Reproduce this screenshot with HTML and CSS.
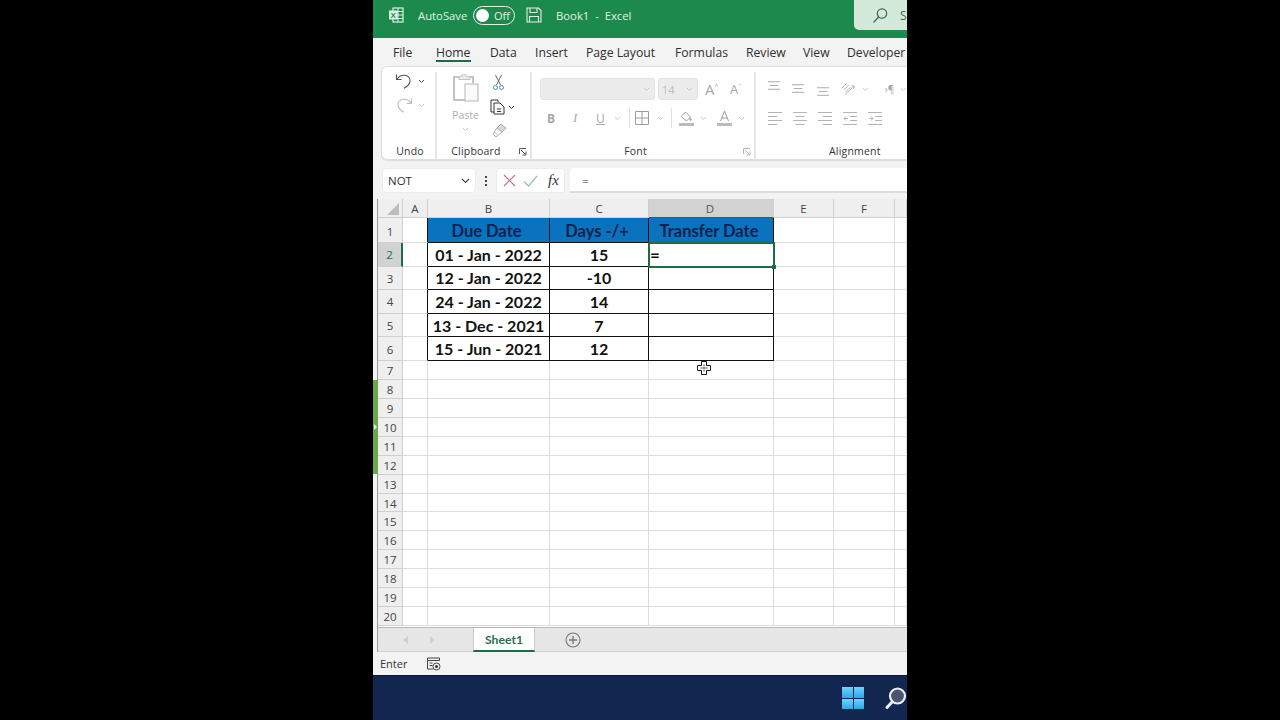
FILE: index.html
```html
<!DOCTYPE html>
<html lang="en">
<head>
<meta charset="utf-8">
<title>Book1 - Excel</title>
<link rel="stylesheet" href="styles.css">
</head>
<body>
<div class="app">
  <header class="titlebar">
    <svg class="xl" width="16" height="16" viewBox="0 0 16 16"><rect x="5" y="1" width="10" height="14" fill="none" stroke="#dff0e4" stroke-width="1.2"/><path d="M5 4.5h10M5 8h10M5 11.5h10M10 1v14" stroke="#dff0e4" fill="none"/><rect x="1" y="3.5" width="8.5" height="9" fill="#dff0e4"/><text x="2.6" y="11" class="xl-x">X</text></svg>
    <span class="autosave">AutoSave</span>
    <span class="toggle"><i class="knob"></i><span>Off</span></span>
    <svg class="save" width="16" height="16" viewBox="0 0 16 16" fill="none" stroke="#dff0e4" stroke-width="1.1"><path d="M1 1h11.5L15 3.5V15H1z"/><path d="M4 1v4.5h7V1M3.5 15V9.5h9V15"/></svg>
    <span class="doc">Book1 &nbsp;- &nbsp;Excel</span>
    <div class="search">
      <svg width="17" height="17" viewBox="0 0 17 17" fill="none" stroke="#3b6a4d" stroke-width="1.2"><circle cx="10" cy="6.5" r="4.7"/><path d="M6.6 10 1.5 15.5"/></svg>
      <span>S</span>
    </div>
  </header>

  <nav class="menu">
    <span class="m-file">File</span>
    <span class="m-home">Home</span>
    <span class="m-data">Data</span>
    <span class="m-insert">Insert</span>
    <span class="m-page">Page Layout</span>
    <span class="m-form">Formulas</span>
    <span class="m-rev">Review</span>
    <span class="m-view">View</span>
    <span class="m-dev">Developer</span>
  </nav>

  <section class="ribbon">
    <div class="group g-undo">
      <div class="g-body undo-body">
        <div class="u-row">
          <svg width="18" height="17" viewBox="0 0 18 17" fill="none" stroke="#555" stroke-width="1.1"><path d="M1.5 1.5v5h5M1.8 6.2C4 3 7 1.8 10 2.3c3.5.6 5.5 3.2 5 6-.4 2.5-2.5 5-6 7"/></svg>
          <svg class="chev" width="7" height="5" viewBox="0 0 7 5" fill="none" stroke="#444" stroke-width="1"><path d="M1 1l2.5 2.5L6 1"/></svg>
        </div>
        <div class="u-row">
          <svg width="18" height="17" viewBox="0 0 18 17" fill="none" stroke="#bdbdbd" stroke-width="1.1"><path d="M16.5 1.5v5h-5M16.2 6.2C14 3 11 1.8 8 2.3c-3.5.6-5.5 3.2-5 6 .4 2.5 2.5 5 6 7"/></svg>
          <svg class="chev" width="7" height="5" viewBox="0 0 7 5" fill="none" stroke="#c6c6c6" stroke-width="1"><path d="M1 1l2.5 2.5L6 1"/></svg>
        </div>
      </div>
      <div class="g-label undo-l">Undo</div>
    </div>

    <div class="group g-clip">
      <div class="g-body clip-body">
        <div class="paste">
          <svg width="28" height="29" viewBox="0 0 28 29" fill="none" stroke="#c4c4c4" stroke-width="1.1"><path d="M7 3H2v23h11" stroke-width="2"/><path d="M7 4.500V2.500h2l1-1.500h4l1 1.500h3v3H7z" fill="#ececec"/><path d="M18 3h3v6" stroke-width="2"/><rect x="13" y="10" width="13" height="17" fill="#fbfbfb" stroke="#bcbcbc"/></svg>
          <span class="paste-t">Paste</span>
          <svg width="7" height="5" viewBox="0 0 7 5" fill="none" stroke="#c6c6c6" stroke-width="1"><path d="M1 1l2.500 2.500L6 1"/></svg>
        </div>
        <div class="clip-tools">
          <svg width="11" height="17" viewBox="0 0 11 17" fill="none" stroke="#666" stroke-width="1"><path d="M2.500 1 7.500 11M8.500 1 3.500 11"/><circle cx="2.500" cy="13.500" r="2" stroke="#4f93a8"/><circle cx="8.500" cy="13.500" r="2" stroke="#4f93a8"/></svg>
          <div class="copy-row">
            <svg width="15" height="16" viewBox="0 0 15 16" fill="none" stroke="#333" stroke-width="1"><path d="M4 13H1V1h7v2"/><path d="M4 4h6l4 4v7H4z"/><path d="M7 10h4M7 12.500h4"/></svg>
            <svg class="chev" width="7" height="5" viewBox="0 0 7 5" fill="none" stroke="#333" stroke-width="1"><path d="M1 1l2.500 2.500L6 1"/></svg>
          </div>
          <svg width="15" height="15" viewBox="0 0 15 15" fill="none" stroke="#a8a8a8" stroke-width="1"><path d="M9 1l5 4-4 4-5-4z" fill="#d8d8d8"/><path d="M5 5 1 11l3 3 6-5M3 9.500l2 2"/></svg>
        </div>
      </div>
      <div class="g-label shift">Clipboard<svg class="launch" width="8" height="8" viewBox="0 0 8 8" fill="none" stroke="#555"><path d="M.5 6V.5H7M2 2l4.500 4.500M3.500 7H7V3.500"/></svg></div>
    </div>

    <div class="group g-font">
      <div class="g-body font-body">
        <div class="f-row f-top">
          <div class="fbox fname"><svg width="7" height="5" viewBox="0 0 7 5" fill="none" stroke="#c6c6c6"><path d="M1 1l2.500 2.500L6 1"/></svg></div>
          <div class="fbox fsize"><span>14</span><svg width="7" height="5" viewBox="0 0 7 5" fill="none" stroke="#c6c6c6"><path d="M1 1l2.500 2.500L6 1"/></svg></div>
          <span class="fa-big">A<sup>^</sup></span>
          <span class="fa-small">A<sup>ˇ</sup></span>
        </div>
        <div class="f-row f-bot">
          <b class="t-b">B</b>
          <i class="t-i">I</i>
          <u class="t-u">U</u>
          <svg class="c1" width="7" height="5" viewBox="0 0 7 5" fill="none" stroke="#c6c6c6"><path d="M1 1l2.500 2.500L6 1"/></svg>
          <i class="vsep"></i>
          <svg class="bord" width="14" height="14" viewBox="0 0 14 14" fill="none" stroke="#9a9a9a"><path d="M.5.5h13v13H.5zM7 .5v13M.5 7h13"/></svg>
          <svg class="c2" width="7" height="5" viewBox="0 0 7 5" fill="none" stroke="#c6c6c6"><path d="M1 1l2.500 2.500L6 1"/></svg>
          <i class="vsep v2"></i>
          <svg class="fill" width="15" height="16" viewBox="0 0 15 16"><path d="M2 6.500 6.500 2l5 5-4 4z" fill="none" stroke="#a0a0a0"/><path d="M10 8l2 0 1 2-2 1z" fill="#aaa"/><rect y="13" width="15" height="3" fill="#bcbcbc"/></svg>
          <svg class="c3" width="7" height="5" viewBox="0 0 7 5" fill="none" stroke="#c6c6c6"><path d="M1 1l2.500 2.500L6 1"/></svg>
          <svg class="acol" width="15" height="16" viewBox="0 0 15 16"><path d="M3.500 11 7.500 1l4 10M5 8h5" fill="none" stroke="#9c9c9c"/><rect y="13" width="15" height="3" fill="#bcbcbc"/></svg>
          <svg class="c4" width="7" height="5" viewBox="0 0 7 5" fill="none" stroke="#c6c6c6"><path d="M1 1l2.500 2.500L6 1"/></svg>
        </div>
      </div>
      <div class="g-label shift">Font<svg class="launch lt" width="8" height="8" viewBox="0 0 8 8" fill="none" stroke="#b5b5b5"><path d="M.5 6V.5H7M2 2l4.500 4.500M3.500 7H7V3.500"/></svg></div>
    </div>

    <div class="group g-align">
      <div class="g-body align-body">
        <div class="a-row a-top">
          <svg width="13" height="10" viewBox="0 0 13 10" class="va-t"><path d="M0 .5h13M2 4.500h9M0 8.500h13" stroke="#a8a8a8" fill="none"/></svg>
          <svg width="13" height="10" viewBox="0 0 13 10" class="va-m"><path d="M0 .5h13M2 4.500h9M0 8.500h13" stroke="#a8a8a8" fill="none"/></svg>
          <svg width="13" height="10" viewBox="0 0 13 10" class="va-b"><path d="M0 .5h13M2 4.500h9M0 8.500h13" stroke="#a8a8a8" fill="none"/></svg>
          <svg width="15" height="14" viewBox="0 0 15 14" fill="none" stroke="#ababab"><path d="M1 6 6 1M3 8l5-5M5 10l5-5M4 13 14 4M11 3.500l3 .5-.5 3"/></svg>
          <svg class="c-a" width="7" height="5" viewBox="0 0 7 5" fill="none" stroke="#c6c6c6"><path d="M1 1l2.500 2.500L6 1"/></svg>
          <span class="para">›¶</span>
          <svg width="7" height="5" viewBox="0 0 7 5" fill="none" stroke="#c6c6c6"><path d="M1 1l2.500 2.500L6 1"/></svg>
        </div>
        <div class="a-row a-bot">
          <svg width="14" height="13" viewBox="0 0 14 13"><path d="M0 .5h14M0 4.500h9M0 8.500h14M0 12.500h9" stroke="#b4b4b4" fill="none"/></svg>
          <svg width="14" height="13" viewBox="0 0 14 13"><path d="M0 .5h14M2.500 4.500h9M0 8.500h14M2.500 12.500h9" stroke="#b4b4b4" fill="none"/></svg>
          <svg width="14" height="13" viewBox="0 0 14 13"><path d="M0 .5h14M5 4.500h9M0 8.500h14M5 12.500h9" stroke="#b4b4b4" fill="none"/></svg>
          <svg width="14" height="13" viewBox="0 0 14 13"><path d="M0 .5h14M7 4.500h7M7 8.500h7M0 12.500h14M5 6.500H1M3 4.500l-2 2 2 2" stroke="#b4b4b4" fill="none"/></svg>
          <svg width="14" height="13" viewBox="0 0 14 13"><path d="M0 .5h14M7 4.500h7M7 8.500h7M0 12.500h14M1 6.500h4M3 4.500l2 2-2 2" stroke="#b4b4b4" fill="none"/></svg>
        </div>
      </div>
      <div class="g-label a-label">Alignment</div>
    </div>
  </section>

  <section class="fbar">
    <div class="namebox"><span>NOT</span><svg width="9" height="6" viewBox="0 0 9 6" fill="none" stroke="#444" stroke-width="1.1"><path d="M1 1l3.500 3.500L8 1"/></svg></div>
    <div class="dots"><i></i><i></i><i></i></div>
    <div class="fx">
      <svg width="13" height="13" viewBox="0 0 13 13" fill="none" stroke="#c2737d" stroke-width="1.2"><path d="M1 1l11 11M12 1 1 12"/></svg>
      <svg width="15" height="12" viewBox="0 0 15 12" fill="none" stroke="#9cc0a4" stroke-width="1.2"><path d="M1 6.500 5.500 11 14 1"/></svg>
      <span class="fx-t">fx</span>
    </div>
    <div class="finput">=</div>
  </section>

  <section class="sheet">
    <div class="row hdr"><div class="rh corner"><svg width="12" height="12" viewBox="0 0 12 12"><path d="M12 0v12H0z" fill="#bdbdbd"/></svg></div><div class="ch">A</div><div class="ch">B</div><div class="ch">C</div><div class="ch sel">D</div><div class="ch">E</div><div class="ch">F</div><div class="ch"></div></div>

    <div class="row r1"><div class="rh">1</div><div class="c tl"></div><div class="c th">Due Date</div><div class="c th">Days -/+</div><div class="c th">Transfer Date</div><div class="c"></div><div class="c"></div><div class="c"></div></div>
    <div class="row rd"><div class="rh on">2</div><div class="c tl"></div><div class="c td">01 - Jan - 2022</div><div class="c td">15</div><div class="c td active">=<i class="handle"></i></div><div class="c"></div><div class="c"></div><div class="c"></div></div>
    <div class="row rd"><div class="rh">3</div><div class="c tl"></div><div class="c td">12 - Jan - 2022</div><div class="c td">-10</div><div class="c td"></div><div class="c"></div><div class="c"></div><div class="c"></div></div>
    <div class="row rd"><div class="rh">4</div><div class="c tl"></div><div class="c td">24 - Jan - 2022</div><div class="c td">14</div><div class="c td"></div><div class="c"></div><div class="c"></div><div class="c"></div></div>
    <div class="row rd"><div class="rh">5</div><div class="c tl"></div><div class="c td">13 - Dec - 2021</div><div class="c td">7</div><div class="c td"></div><div class="c"></div><div class="c"></div><div class="c"></div></div>
    <div class="row rd"><div class="rh">6</div><div class="c tl"></div><div class="c td">15 - Jun - 2021</div><div class="c td">12</div><div class="c td"></div><div class="c"></div><div class="c"></div><div class="c"></div></div>

    <div class="row"><div class="rh">7</div><div class="c"></div><div class="c"></div><div class="c"></div><div class="c"></div><div class="c"></div><div class="c"></div><div class="c"></div></div>
    <div class="row"><div class="rh">8</div><div class="c"></div><div class="c"></div><div class="c"></div><div class="c"></div><div class="c"></div><div class="c"></div><div class="c"></div></div>
    <div class="row"><div class="rh">9</div><div class="c"></div><div class="c"></div><div class="c"></div><div class="c"></div><div class="c"></div><div class="c"></div><div class="c"></div></div>
    <div class="row"><div class="rh">10</div><div class="c"></div><div class="c"></div><div class="c"></div><div class="c"></div><div class="c"></div><div class="c"></div><div class="c"></div></div>
    <div class="row"><div class="rh">11</div><div class="c"></div><div class="c"></div><div class="c"></div><div class="c"></div><div class="c"></div><div class="c"></div><div class="c"></div></div>
    <div class="row"><div class="rh">12</div><div class="c"></div><div class="c"></div><div class="c"></div><div class="c"></div><div class="c"></div><div class="c"></div><div class="c"></div></div>
    <div class="row"><div class="rh">13</div><div class="c"></div><div class="c"></div><div class="c"></div><div class="c"></div><div class="c"></div><div class="c"></div><div class="c"></div></div>
    <div class="row"><div class="rh">14</div><div class="c"></div><div class="c"></div><div class="c"></div><div class="c"></div><div class="c"></div><div class="c"></div><div class="c"></div></div>
    <div class="row"><div class="rh">15</div><div class="c"></div><div class="c"></div><div class="c"></div><div class="c"></div><div class="c"></div><div class="c"></div><div class="c"></div></div>
    <div class="row"><div class="rh">16</div><div class="c"></div><div class="c"></div><div class="c"></div><div class="c"></div><div class="c"></div><div class="c"></div><div class="c"></div></div>
    <div class="row"><div class="rh">17</div><div class="c"></div><div class="c"></div><div class="c"></div><div class="c"></div><div class="c"></div><div class="c"></div><div class="c"></div></div>
    <div class="row"><div class="rh">18</div><div class="c"></div><div class="c"></div><div class="c"></div><div class="c"></div><div class="c"></div><div class="c"></div><div class="c"></div></div>
    <div class="row"><div class="rh">19</div><div class="c"></div><div class="c"></div><div class="c"></div><div class="c"></div><div class="c"></div><div class="c"></div><div class="c"></div></div>
    <div class="row"><div class="rh">20</div><div class="c"></div><div class="c"></div><div class="c"></div><div class="c"></div><div class="c"></div><div class="c"></div><div class="c"></div></div>

    <svg class="cursor" width="14" height="14" viewBox="0 0 14 14"><path d="M4.500.5h5v4h4v5h-4v4h-5v-4h-4v-5h4z" fill="#fff" stroke="#111"/><path d="M7 3v8M3 7h8" stroke="#555" stroke-width=".8"/></svg>
    <div class="greenbar"></div>
  </section>

  <section class="tabs">
    <svg class="nav1" width="5" height="8" viewBox="0 0 5 8"><path d="M5 0v8L0 4z" fill="#d0d0d0"/></svg>
    <svg class="nav2" width="5" height="8" viewBox="0 0 5 8"><path d="M0 0v8l5-4z" fill="#d0d0d0"/></svg>
    <div class="tab">Sheet1</div>
    <svg class="add" width="16" height="16" viewBox="0 0 16 16" fill="none" stroke="#777" stroke-width="1.1"><circle cx="8" cy="8" r="7"/><path d="M8 4v8M4 8h8" stroke-width="1.4"/></svg>
  </section>

  <footer class="status">
    <span class="s-enter">Enter</span>
    <svg width="14" height="14" viewBox="0 0 14 14" fill="none" stroke="#444"><path d="M.5 1h12v2.500H.5zM.5 3.500V12H6"/><path d="M2.500 6h3M2.500 8.500h3"/><circle cx="9.500" cy="9.500" r="3.500"/><circle cx="9.500" cy="9.500" r="1.500" fill="#333" stroke="none"/></svg>
  </footer>

  <div class="taskbar">
    <div class="win"><i></i><i></i><i></i><i></i></div>
    <svg width="22" height="24" viewBox="0 0 22 24"><circle cx="12.500" cy="10" r="7.500" fill="#4a5570" stroke="#e8eef5" stroke-width="2.200"/><path d="M7 16 2 21.500" stroke="#e8eef5" stroke-width="3" stroke-linecap="round"/></svg>
  </div>
</div>
</body>
</html>
```
FILE: styles.css
```css
* { box-sizing: border-box; }
html, body { margin: 0; height: 100%; background: #000; overflow: hidden; }
body { display: flex; justify-content: center; font-family: "Open Sans", "Noto Sans", sans-serif; color: #333; }
.app { width: 534px; height: 720px; display: flex; flex-direction: column; overflow: hidden; background: #f3f3f3; position: relative; }

/* title */
.titlebar { height: 38px; flex: none; background: #1b8a4c; display: flex; align-items: center; color: #e3f1e7; font-size: 11.300px; padding: 0 0 8px 15px; }
.xl-x { font: bold 8px "Liberation Sans", sans-serif; fill: #1b8a4c; }
.autosave { margin-left: 14px; width: 50px; white-space: nowrap; }
.toggle { margin-left: 5px; width: 42px; height: 19px; border: 1px solid #e3f1e7; border-radius: 10px; display: flex; align-items: center; padding-left: 2px; font-size: 11px; gap: 5px; }
.knob { width: 13px; height: 13px; border-radius: 50%; background: #fff; flex: none; }
.save { margin-left: 11px; }
.doc { margin-left: 14px; white-space: nowrap; }
.search { margin-left: auto; width: 53px; height: 30px; align-self: flex-start; background: #d3e9d9; border-radius: 0 0 0 5px; display: flex; align-items: center; color: #3b6a4d; padding-left: 18px; gap: 11px; font-size: 12px; }

/* menu */
.menu { height: 28px; flex: none; display: flex; align-items: center; font-size: 12.200px; color: #2f2f2f; white-space: nowrap; }
.menu span { flex: none; }
.m-file { margin-left: 20px; width: 43px; }
.m-home { width: 54px; height: 28px; line-height: 29px; position: relative; font-weight: 500; }
.m-home::after { content: ""; position: absolute; left: 0; bottom: 4px; width: 35px; height: 2px; background: #1f6b45; }
.m-data { width: 45px; }
.m-insert { width: 51px; }
.m-page { width: 89px; }
.m-form { width: 71px; }
.m-rev { width: 57px; }
.m-view { width: 44px; }

/* ribbon */
.ribbon { height: 94px; flex: none; margin-left: 8px; background: #fff; border: 1px solid #dedede; border-right: 0; border-radius: 6px 0 0 6px; display: flex; padding-top: 5px; box-shadow: 0 1px 1px #ddd; }
.group { display: flex; flex-direction: column; height: 87px; flex: none; border-right: 2px solid #e6e6e6; position: relative; }
.g-body { flex: 1; min-height: 0; display: flex; }
.g-label { height: 17px; flex: none; font-size: 10.500px; text-align: center; color: #333; line-height: 19px; letter-spacing: .2px; white-space: nowrap; }
.g-label.shift { padding-right: 15px; }
.g-label.undo-l { padding-left: 3px; }
.a-label { text-align: left; padding-left: 73px; }
.launch { position: absolute; right: 3px; bottom: 3px; }
.g-undo { width: 55px; }
.g-clip { width: 95px; }
.g-font { width: 224px; }
.g-align { border-right: 0; width: 151px; }
.undo-body { flex-direction: column; padding: 1px 0 0 13px; gap: 7px; }
.u-row { display: flex; align-items: center; gap: 5px; height: 17px; }
.clip-body { padding: 2px 0 0 13px; }
.paste { width: 31px; display: flex; flex-direction: column; align-items: center; }
.paste-t { font-size: 10.500px; color: #aeaeae; margin: 6px 0 5px; line-height: 13px; }
.clip-tools { margin-left: 9px; display: flex; flex-direction: column; gap: 8px; }
.clip-tools > svg { margin-left: 3px; }
.clip-tools > svg:last-child { margin-left: 2px; }
.copy-row { display: flex; align-items: center; gap: 3px; }

.font-body { flex-direction: column; padding: 6px 0 0 8px; }
.f-row { display: flex; align-items: center; flex: none; }
.f-top { height: 22px; }
.fbox { height: 22px; background: #ececec; border: 1px solid #e3e3e3; border-radius: 3px; display: flex; align-items: center; justify-content: flex-end; padding-right: 4px; }
.fname { width: 115px; }
.fsize { width: 40px; margin-left: 3px; justify-content: space-between; padding-left: 3px; color: #bdbdbd; font-size: 11px; }
.fa-big { margin-left: 7px; font-size: 15px; color: #a8a8a8; width: 25px; }
.fa-small { font-size: 13px; color: #a8a8a8; }
.fa-big sup, .fa-small sup { font-size: 7px; line-height: 0; }
.f-bot { height: 22px; margin-top: 7px; font-size: 12px; color: #a8a8a8; }
.t-b { margin-left: 7px; width: 25px; font-weight: 700; }
.t-i { width: 24px; font-family: "Liberation Serif", serif; font-size: 13px; padding-left: 1px; }
.t-u { width: 14px; }
.c1 { margin-left: 4px; }
.vsep { width: 1px; height: 20px; background: #dfdfdf; margin-left: 8px; }
.vsep.v2 { margin-left: 7px; }
.bord { margin-left: 5px; }
.c2 { margin-left: 8px; }
.fill { margin-left: 7px; }
.c3 { margin-left: 6px; }
.acol { margin-left: 10px; }
.c4 { margin-left: 6px; }

.align-body { flex-direction: column; padding: 6px 0 0 12px; }
.a-row { display: flex; align-items: center; flex: none; }
.a-top { height: 22px; gap: 12px; }
.va-t { align-self: flex-start; margin-top: 3px; }
.va-b { align-self: flex-end; margin-bottom: 3px; }
.c-a { margin-left: -5px; }
.para { font-size: 10px; color: #a8a8a8; margin-left: 4px; margin-right: -6px; }
.a-bot { height: 22px; margin-top: 7px; gap: 11px; }

/* formula bar */
.fbar { height: 25px; flex: none; margin-top: 8px; display: flex; align-items: stretch; font-size: 11.500px; color: #333; }
.namebox { margin-left: 9px; width: 94px; background: #fff; border-radius: 4px; display: flex; align-items: center; justify-content: space-between; padding: 0 5px; border: 1px solid #ececec; }
.dots { width: 20px; display: flex; flex-direction: column; align-items: center; justify-content: center; gap: 2px; }
.dots i { width: 2px; height: 2px; background: #444; }
.fx { width: 69px; background: #fff; border-radius: 4px 4px 0 0; display: flex; align-items: center; padding-left: 6px; gap: 7px; border: 1px solid #ececec; }
.fx-t { font-family: "Liberation Serif", serif; font-style: italic; font-size: 15px; color: #333; margin-left: 3px; }
.finput { margin-left: 5px; flex: 1; background: #fff; border-radius: 4px 0 0 0; padding-left: 12px; line-height: 25px; border-bottom: 2px solid #dcdcdc; }

/* sheet */
.sheet { flex: none; height: 428px; margin-top: 6px; background: #fff; position: relative; margin-left: 4px; border-left: 1px solid #9a9a9a; }
.row { display: grid; grid-template-columns: 25px 25px 122px 99px 125px 60px 61px 1fr; height: 18.950px; }
.row.hdr { height: 19px; }
.r1.row { height: 25px; }
.rd.row { height: 23.600px; }
.rh, .ch { background: #efefef; color: #444; font-size: 11.500px; display: flex; align-items: center; justify-content: center; border-right: 1px solid #cfcfcf; border-bottom: 1px solid #d0d0d0; }
.rh { padding: 1px 0 0; }
.r1 .rh { padding-top: 3px; }
.rh.on { background: #d2d2d2; color: #1f6b45; border-right: 2px solid #1f6b45; }
.corner { align-items: flex-end; justify-content: flex-end; padding: 0 3px 2px 0; }
.ch.sel { background: #d2d2d2; border-bottom: 1px solid #1f6b45; color: #555; padding-right: 2px; }
.c { border-right: 1px solid #dedede; border-bottom: 1px solid #dedede; }
.c.tl { border-right-color: #111; }
.th, .td { display: flex; align-items: center; justify-content: center; font-family: Lato, "Liberation Sans", sans-serif; font-weight: 700; font-size: 16px; border-right-color: #111; border-bottom-color: #111; color: #111; white-space: nowrap; }
.th { background: #0b72bd; color: #06224e; padding: 1px 4px 0 0; font-size: 16.500px; }
.td.active { justify-content: flex-start; padding-left: 0; border: 1px solid #1f6b45; box-shadow: 0 0 0 1px #1f6b45; position: relative; z-index: 1; font-size: 17px; }
.handle { position: absolute; right: -3px; bottom: -3px; width: 4px; height: 4px; background: #1f6b45; }
.cursor { position: absolute; left: 319px; top: 162px; z-index: 2; }
.greenbar { position: absolute; left: -5px; top: 181px; width: 5px; height: 94px; background: #6aa84a; }
.greenbar::after { content: ""; position: absolute; left: 1px; top: 44px; border-left: 3px solid #e5f0dd; border-top: 3px solid transparent; border-bottom: 3px solid transparent; }

/* tabs */
.tabs { flex: none; height: 25px; margin-left: 4px; background: #e6e6e6; border-top: 1px solid #b9b9b9; border-left: 1px solid #9a9a9a; display: flex; align-items: center; border-bottom: 1px solid #d0d0d0; }
.nav1 { margin-left: 25px; }
.nav2 { margin-left: 22px; }
.tab { margin-left: 38px; width: 62px; height: 24px; background: #fff; border-bottom: 2px solid #1f6b45; color: #2a6d4a; font-family: Lato, sans-serif; font-weight: 700; font-size: 12.200px; display: flex; align-items: center; justify-content: center; border-left: 1px solid #ccc; border-right: 1px solid #ccc; align-self: flex-start; }
.add { margin-left: 30px; }

/* status */
.status { flex: none; height: 23px; background: #f3f3f3; display: flex; align-items: center; font-size: 11px; color: #333; }
.s-enter { margin-left: 7px; width: 47px; }

/* taskbar */
.taskbar { flex: 1; background: #12264f; display: flex; align-items: center; justify-content: flex-end; gap: 21px; border-top: 1px solid #0b1a38; }
.win { width: 22px; height: 22px; display: grid; grid-template-columns: 1fr 1fr; gap: 1px; }
.win i { background: linear-gradient(180deg, #6fd3f7, #2ea6ec); }
```
